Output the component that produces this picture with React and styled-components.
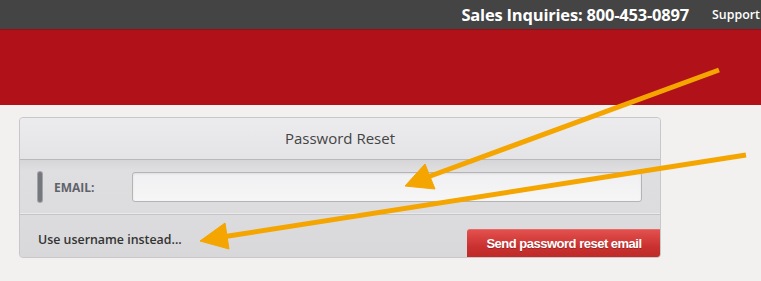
import styled, { createGlobalStyle } from "styled-components";

const GlobalStyle = createGlobalStyle`
    html, body {
        margin: 0;
        padding: 0;
        background: #f2f1ef;
        font-family: "Open Sans", "Liberation Sans", sans-serif;
    }
`;

const Page = styled.div`
    position: relative;
    width: 761px;
    height: 281px;
    overflow: hidden;
    background: #f2f1ef;
`;

const TopBar = styled.div`
    height: 29px;
    background: #444444;
    display: flex;
    align-items: center;
    justify-content: flex-end;
    gap: 23px;
    padding-right: 1px;
    white-space: nowrap;
    overflow: hidden;
`;

const Phone = styled.span`
    color: #ffffff;
    font-weight: 700;
    font-size: 16.5px;
    letter-spacing: -0.2px;
`;

const NavLink = styled.span`
    color: #ffffff;
    font-weight: 600;
    font-size: 12.4px;
`;

const Banner = styled.div`
    height: 76px;
    background: #b11119;
    border-top: 1px solid #8f1016;
    box-sizing: border-box;
`;

const Content = styled.div`
    padding: 12px 0 0 19px;
`;

const Panel = styled.div`
    width: 642px;
    border: 1px solid #c8c8cb;
    border-radius: 4px;
    overflow: hidden;
    box-sizing: border-box;
    background: #dedee1;
`;

const TitleRow = styled.div`
    height: 42px;
    display: flex;
    align-items: center;
    justify-content: center;
    padding-bottom: 2px;
    box-sizing: border-box;
    background: linear-gradient(#ececef, #e4e4e7);
    border-bottom: 1px solid #b9b9bc;
    color: #444;
    font-size: 15px;
`;

const FieldRow = styled.div`
    height: 54px;
    display: flex;
    align-items: center;
    padding-left: 18px;
    padding-right: 18px;
    background: linear-gradient(#d6d6d9, #dfdfe2 20%, #dcdcdf);
    border-bottom: 1px solid #c4c4c7;
    box-shadow: inset 0 -1px 0 #eaeaec;
`;

const Marker = styled.div`
    width: 4px;
    height: 30px;
    border-radius: 2px;
    background: #75787d;
    box-shadow: 0 0 0 1px #a2a4a8;
    margin-right: 12px;
`;

const Label = styled.label`
    width: 78px;
    font-weight: 700;
    font-size: 12px;
    color: #60626a;
`;

const Input = styled.input`
    flex: 1;
    height: 30px;
    box-sizing: border-box;
    border: 1px solid #b4b4b7;
    border-radius: 3px;
    background: linear-gradient(#f0f0f2, #f6f6f7);
    box-shadow: inset 0 1px 2px rgba(0, 0, 0, 0.08);
    outline: none;
`;

const FooterRow = styled.div`
    height: 42px;
    display: flex;
    align-items: flex-end;
    justify-content: space-between;
    background: linear-gradient(#dcdcdf, #d8d8db);
`;

const SwitchLink = styled.span`
    font-weight: 600;
    font-size: 12.4px;
    color: #333;
    padding: 0 0 9px 18px;
`;

const SendButton = styled.button`
    width: 194px;
    height: 29px;
    border: none;
    border-top: 1px solid #e86a66;
    border-radius: 3px 0 3px 0;
    background: linear-gradient(#e2504d, #c9312f 60%, #bd2a28);
    color: #ffffff;
    font-family: "Liberation Sans", Arial, sans-serif;
    font-weight: 700;
    font-size: 13px;
    letter-spacing: -0.5px;
    padding: 0 0 2px;
    margin-right: -1px;
    margin-bottom: -1px;
    text-shadow: 0 1px 0 rgba(0, 0, 0, 0.25);
`;

const Arrows = styled.svg`
    position: absolute;
    left: 0;
    top: 0;
    pointer-events: none;
`;

export default function App() {
    return (
        <Page>
            <GlobalStyle />
            <TopBar>
                <Phone>Sales Inquiries: 800-453-0897</Phone>
                <NavLink>Support</NavLink>
            </TopBar>
            <Banner />
            <Content>
                <Panel>
                    <TitleRow>Password Reset</TitleRow>
                    <FieldRow>
                        <Marker />
                        <Label>EMAIL:</Label>
                        <Input type="text" />
                    </FieldRow>
                    <FooterRow>
                        <SwitchLink>Use username instead...</SwitchLink>
                        <SendButton>Send password reset email</SendButton>
                    </FooterRow>
                </Panel>
            </Content>
            <Arrows width="761" height="281" viewBox="0 0 761 281">
                <g fill="#f5a500" stroke="#f5a500">
                    <line x1="719" y1="70" x2="425" y2="178" strokeWidth="5" />
                    <polygon points="405,186 425,164 435,189" strokeWidth="1" />
                    <line x1="746" y1="155" x2="222" y2="237" strokeWidth="5" />
                    <polygon points="200,241 225,223 229,249" strokeWidth="1" />
                </g>
            </Arrows>
        </Page>
    );
}
